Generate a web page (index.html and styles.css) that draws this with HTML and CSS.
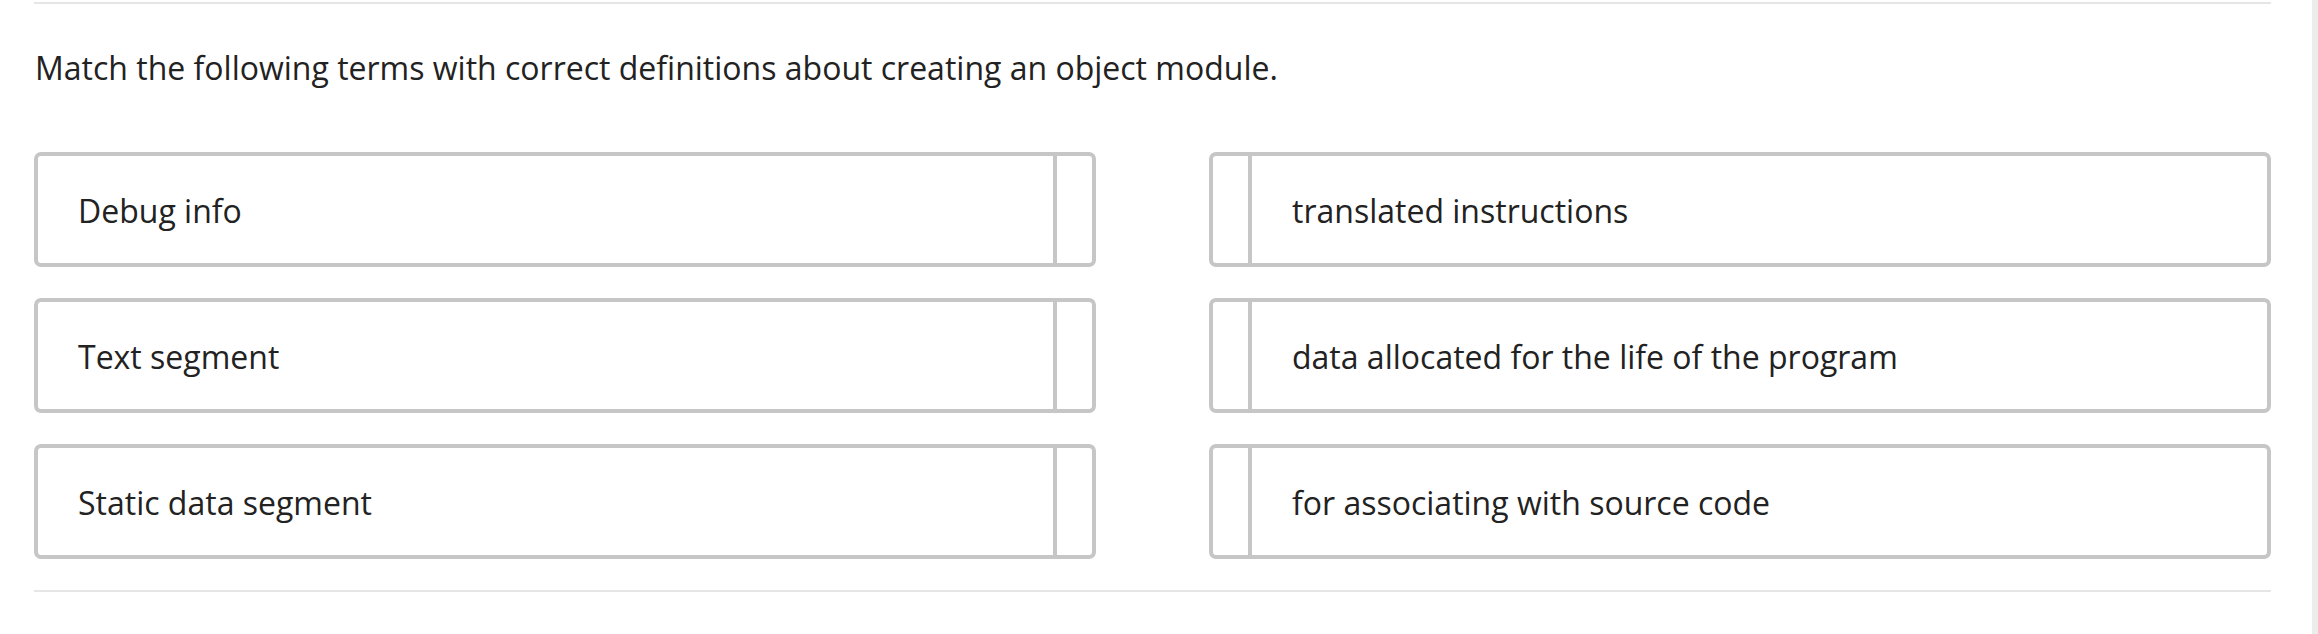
FILE: index.html
```html
<!DOCTYPE html>
<html lang="en">
<head>
<meta charset="utf-8">
<title>Matching question</title>
<link rel="stylesheet" href="styles.css">
</head>
<body>
<div class="page">
  <main class="content">
    <hr class="rule rule-top">
    <p class="question">Match the following terms with correct definitions about creating an object module.</p>
    <div class="match-grid">
      <div class="item item-term">
        <div class="item-text">Debug info</div>
        <div class="item-slot"></div>
      </div>
      <div class="item item-def">
        <div class="item-slot"></div>
        <div class="item-text">translated instructions</div>
      </div>
      <div class="item item-term">
        <div class="item-text">Text segment</div>
        <div class="item-slot"></div>
      </div>
      <div class="item item-def">
        <div class="item-slot"></div>
        <div class="item-text">data allocated for the life of the program</div>
      </div>
      <div class="item item-term">
        <div class="item-text">Static data segment</div>
        <div class="item-slot"></div>
      </div>
      <div class="item item-def">
        <div class="item-slot"></div>
        <div class="item-text">for associating with source code</div>
      </div>
    </div>
    <hr class="rule rule-bottom">
  </main>
  <div class="scroll-edge"></div>
</div>
</body>
</html>
```

FILE: styles.css
```css
* {
  box-sizing: border-box;
}

html, body {
  margin: 0;
  padding: 0;
  background: #ffffff;
}

body {
  font-family: "Open Sans", "Liberation Sans", sans-serif;
  color: #222222;
}

.page {
  display: flex;
  min-height: 634px;
}

.content {
  flex: 1;
  padding: 2px 41px 0 34px;
}

.rule {
  border: 0;
  height: 2px;
  background: #e6e6e6;
  margin: 0;
}

.question {
  margin: 42px 0 62px;
  font-size: 32px;
  line-height: 44px;
  padding-left: 1px;
}

.match-grid {
  display: grid;
  grid-template-columns: 1062px 1062px;
  column-gap: 113px;
  row-gap: 31px;
}

.item {
  display: flex;
  height: 115px;
  border: 4px solid #c6c6c6;
  border-radius: 7px;
  background: #ffffff;
}

.item-text {
  flex: 1;
  display: flex;
  align-items: center;
  font-size: 32px;
  line-height: 44px;
  padding-left: 40px;
  padding-top: 2px;
}

.item-slot {
  width: 39px;
  flex: none;
}

.item-term .item-slot {
  border-left: 4px solid #c6c6c6;
}

.item-def .item-slot {
  border-right: 4px solid #c6c6c6;
}

.rule-bottom {
  margin-top: 31px;
}

.scroll-edge {
  width: 6px;
  flex: none;
  background: #ececec;
}
```
